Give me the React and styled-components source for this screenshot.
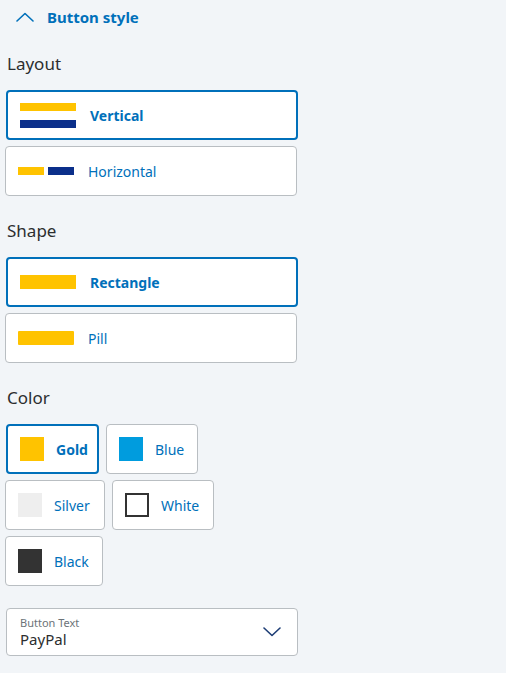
import React, { useState } from 'react'
import styled, { createGlobalStyle } from 'styled-components'

const GlobalStyle = createGlobalStyle`
    html, body {
        margin: 0;
        padding: 0;
        background: #f2f5f8;
    }
    body {
        font-family: "Noto Sans", "Open Sans", sans-serif;
    }
`

const Panel = styled.div`
    width: 506px;
    min-height: 673px;
    box-sizing: border-box;
    padding: 0 0 0 5px;
    background: #f2f5f8;
`

const Header = styled.button`
    display: flex;
    align-items: center;
    gap: 13px;
    height: 34px;
    padding: 0 0 0 11px;
    margin: 0;
    border: none;
    background: none;
    color: #0070ba;
    font-family: inherit;
    font-size: 15px;
    font-weight: 700;
    cursor: pointer;
`

const Section = styled.div`
    display: flex;
    flex-direction: column;
    align-items: flex-start;
    gap: 6px;
`

const Label = styled.div`
    color: #2c2e2f;
    font-size: 17px;
    line-height: 22px;
    padding: ${p => p.$top}px 0 15px 2px;
`

const Card = styled.button`
    display: flex;
    align-items: center;
    gap: ${p => p.$gap || 14}px;
    box-sizing: border-box;
    width: ${p => p.$width || 292}px;
    height: 50px;
    padding: 0 0 0 12px;
    margin: 0 0 0 ${p => (p.$selected ? 1 : 0)}px;
    background: #fff;
    border: ${p => (p.$selected ? '2px solid #0070ba' : '1px solid #b9bec2')};
    border-radius: 4px;
    color: #0070ba;
    font-family: inherit;
    font-size: 14px;
    font-weight: ${p => (p.$selected ? 700 : 400)};
    cursor: pointer;
    text-align: left;
`

const BarIcon = styled.span`
    display: flex;
    flex-direction: ${p => (p.$dir === 'row' ? 'row' : 'column')};
    gap: ${p => (p.$dir === 'row' ? 4 : 9)}px;
    width: 56px;
    flex-shrink: 0;
`

const Bar = styled.span`
    display: block;
    flex: ${p => (p.$grow ? 1 : 'none')};
    width: ${p => (p.$grow ? 'auto' : '100%')};
    height: ${p => p.$h || 7}px;
    background: ${p => p.$color};
    border-radius: ${p => p.$radius || 0}px;
`

const Row = styled.div`
    display: flex;
    gap: 7px;
`

const Swatch = styled.span`
    display: block;
    box-sizing: border-box;
    width: 24px;
    height: 24px;
    flex-shrink: 0;
    background: ${p => p.$color};
    border: ${p => (p.$outline ? '2px solid #333' : 'none')};
`

const Select = styled.div`
    display: flex;
    align-items: center;
    justify-content: space-between;
    box-sizing: border-box;
    width: 292px;
    height: 48px;
    margin: 22px 0 0 1px;
    padding: 0 16px 0 13px;
    background: #fff;
    border: 1px solid #b9bec2;
    border-radius: 4px;
`

const SelectText = styled.div`
    display: flex;
    flex-direction: column;
    gap: 1px;
`

const SelectLabel = styled.span`
    color: #6c7378;
    font-size: 11px;
    line-height: 13px;
`

const SelectValue = styled.span`
    color: #2c2e2f;
    font-size: 15px;
    line-height: 19px;
`

const Chevron = ({ up, color }) => (
    <svg width="18" height="10" viewBox="0 0 18 10" fill="none">
        <path
            d={up ? 'M1 9L9 1.5L17 9' : 'M1 1L9 8.5L17 1'}
            stroke={color}
            strokeWidth="1.6"
            strokeLinecap="round"
            strokeLinejoin="round"
        />
    </svg>
)

const GOLD = '#ffc300'
const NAVY = '#0b2f8a'

const colors = [
    [
        { key: 'gold', label: 'Gold', color: GOLD, width: 93 },
        { key: 'blue', label: 'Blue', color: '#009cde', width: 92 },
    ],
    [
        { key: 'silver', label: 'Silver', color: '#eeeeee', width: 100 },
        { key: 'white', label: 'White', color: '#fff', width: 102, outline: true },
    ],
    [{ key: 'black', label: 'Black', color: '#333333', width: 98 }],
]

const App = () => {
    const [layout, setLayout] = useState('vertical')
    const [shape, setShape] = useState('rect')
    const [color, setColor] = useState('gold')

    return (
        <Panel>
            <GlobalStyle />
            <Header type="button">
                <Chevron up color="#0070ba" />
                Button style
            </Header>

            <Label $top={19}>Layout</Label>
            <Section>
                <Card $selected={layout === 'vertical'} onClick={() => setLayout('vertical')}>
                    <BarIcon>
                        <Bar $color={GOLD} $h={8} />
                        <Bar $color={NAVY} $h={8} />
                    </BarIcon>
                    Vertical
                </Card>
                <Card $selected={layout === 'horizontal'} onClick={() => setLayout('horizontal')}>
                    <BarIcon $dir="row">
                        <Bar $grow $color={GOLD} $h={8} />
                        <Bar $grow $color={NAVY} $h={8} />
                    </BarIcon>
                    Horizontal
                </Card>
            </Section>

            <Label $top={24}>Shape</Label>
            <Section>
                <Card $selected={shape === 'rect'} onClick={() => setShape('rect')}>
                    <BarIcon>
                        <Bar $color={GOLD} $h={14} />
                    </BarIcon>
                    Rectangle
                </Card>
                <Card $selected={shape === 'pill'} onClick={() => setShape('pill')}>
                    <BarIcon>
                        <Bar $color={GOLD} $h={14} $radius={1} />
                    </BarIcon>
                    Pill
                </Card>
            </Section>

            <Label $top={24}>Color</Label>
            <Section>
                {colors.map((row, i) => (
                    <Row key={i}>
                        {row.map(c => (
                            <Card
                                key={c.key}
                                $width={c.width}
                                $gap={12}
                                $selected={color === c.key}
                                onClick={() => setColor(c.key)}
                            >
                                <Swatch $color={c.color} $outline={c.outline} />
                                {c.label}
                            </Card>
                        ))}
                    </Row>
                ))}
            </Section>

            <Select>
                <SelectText>
                    <SelectLabel>Button Text</SelectLabel>
                    <SelectValue>PayPal</SelectValue>
                </SelectText>
                <Chevron color="#1d3d75" />
            </Select>
        </Panel>
    )
}

export default App
